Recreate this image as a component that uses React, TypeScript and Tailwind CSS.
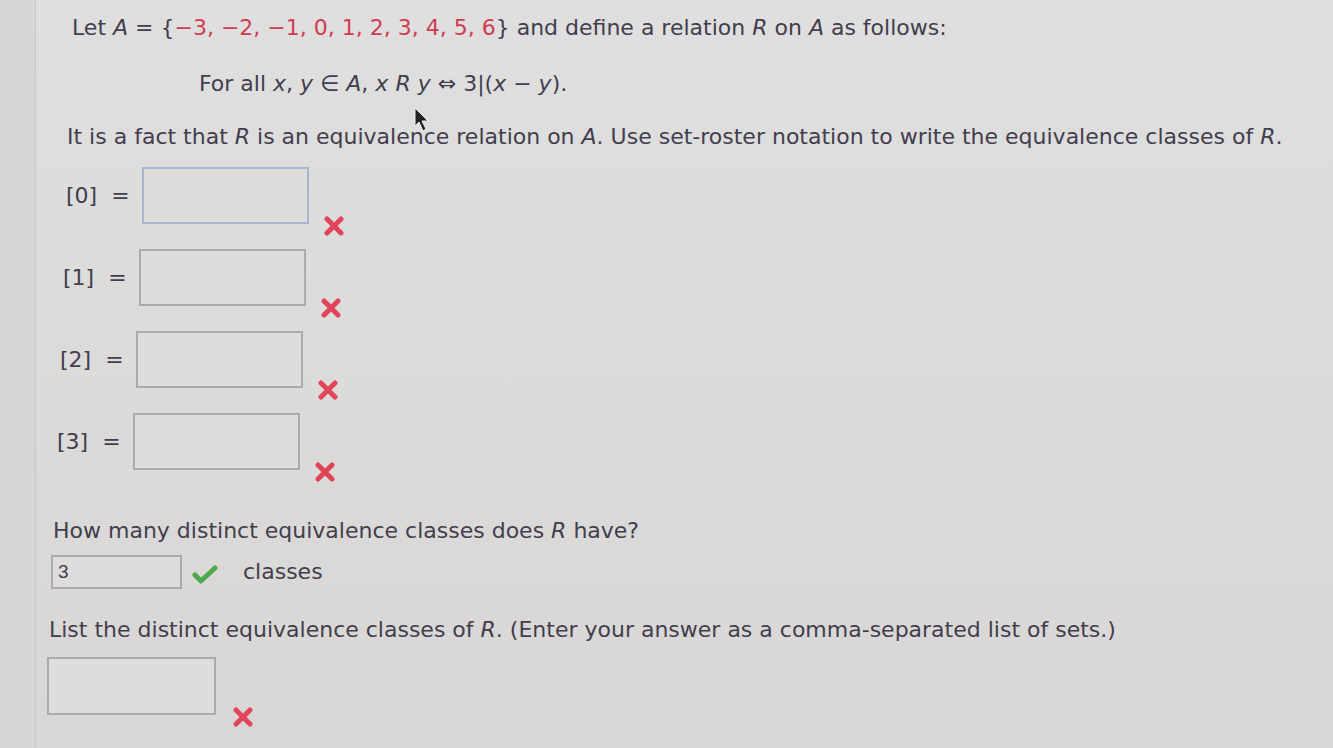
const font = { fontFamily: '"DejaVu Sans", Verdana, sans-serif' };

function Cross() {
  return (
    <svg width="22" height="20" viewBox="0 0 22 20" className="shrink-0">
      <path d="M4 3 L18 17 M18 3 L4 17" stroke="#e0455a" strokeWidth="5" strokeLinecap="round" />
    </svg>
  );
}

function Check() {
  return (
    <svg width="26" height="20" viewBox="0 0 26 20" className="shrink-0">
      <path d="M3 11 L9 17 L23 4" fill="none" stroke="#4fa84c" strokeWidth="5" strokeLinecap="round" strokeLinejoin="round" />
    </svg>
  );
}

function ClassRow({ label, indent }: { label: string; indent: string }) {
  return (
    <div className={`flex h-[57px] items-start ${indent}`}>
      <div className="flex h-[57px] w-[76px] shrink-0 items-center gap-[14px]">
        <span>[{label}]</span>
        <span>=</span>
      </div>
      <div
        className={`h-[57px] w-[167px] shrink-0 border-2 bg-[#dedddc] ${
          label === "0" ? "border-[#a9b6cf]" : "border-[#acaaaa]"
        }`}
      />
      <div className="ml-[14px] mt-[49px]">
        <Cross />
      </div>
    </div>
  );
}

export default function App() {
  return (
    <div
      className="relative flex h-[748px] w-[1333px] overflow-hidden bg-gradient-to-b from-[#dfdfdf] to-[#d8d7d5] text-[22px] leading-[28px] text-[#423e4d]"
      style={font}
    >
      <div className="w-[36px] shrink-0 border-r border-[#c9c9c9] bg-[#d6d6d5]" />
      <div className="flex flex-1 flex-col pl-[31px]">
        <p className="ml-[5px] mt-[14px] whitespace-nowrap">
          Let <i>A</i> = {"{"}
          <span className="text-[#cf3c52]">−3, −2, −1, 0, 1, 2, 3, 4, 5, 6</span>
          {"}"} and define a relation <i>R</i> on <i>A</i> as follows:
        </p>
        <p className="ml-[132px] mt-[28px] whitespace-nowrap">
          For all <i>x</i>, <i>y</i> ∈ <i>A</i>, <i>x</i> <i>R</i> <i>y</i> ⇔ 3|(<i>x</i> − <i>y</i>).
        </p>
        <p className="mt-[25px] whitespace-nowrap">
          It is a fact that <i>R</i> is an equivalence relation on <i>A</i>. Use set-roster notation to write the equivalence classes of <i>R</i>.
        </p>
        <div className="mt-[16px] flex flex-col gap-[25px]">
          <ClassRow label="0" indent="-ml-[1px]" />
          <ClassRow label="1" indent="-ml-[4px]" />
          <ClassRow label="2" indent="-ml-[7px]" />
          <ClassRow label="3" indent="-ml-[10px]" />
        </div>
        <p className="-ml-[14px] mt-[47px] whitespace-nowrap">
          How many distinct equivalence classes does <i>R</i> have?
        </p>
        <div className="-ml-[16px] mt-[10px] flex items-center">
          <div
            className="flex h-[34px] w-[131px] items-center border-2 border-[#acaaaa] bg-[#dedddc] pl-[5px] text-[19px]"
            style={{ fontFamily: '"Liberation Sans", Arial, sans-serif' }}
          >
            3
          </div>
          <div className="ml-[10px] mt-[4px]">
            <Check />
          </div>
          <span className="ml-[25px]">classes</span>
        </div>
        <p className="-ml-[18px] mt-[27px] whitespace-nowrap">
          List the distinct equivalence classes of <i>R</i>. (Enter your answer as a comma-separated list of sets.)
        </p>
        <div className="-ml-[20px] mt-[13px] flex h-[58px] items-start">
          <div className="h-[58px] w-[169px] shrink-0 border-2 border-[#acaaaa] bg-[#dedddc]" />
          <div className="ml-[16px] mt-[50px]">
            <Cross />
          </div>
        </div>
      </div>
      <svg width="16" height="26" viewBox="0 0 16 26" className="absolute left-[414px] top-[107px]">
        <path d="M1 1 L1 19 L5 15 L9 24 L12 22 L8 14 L14 14 Z" fill="#222" stroke="#eee" strokeWidth="1" />
      </svg>
    </div>
  );
}
